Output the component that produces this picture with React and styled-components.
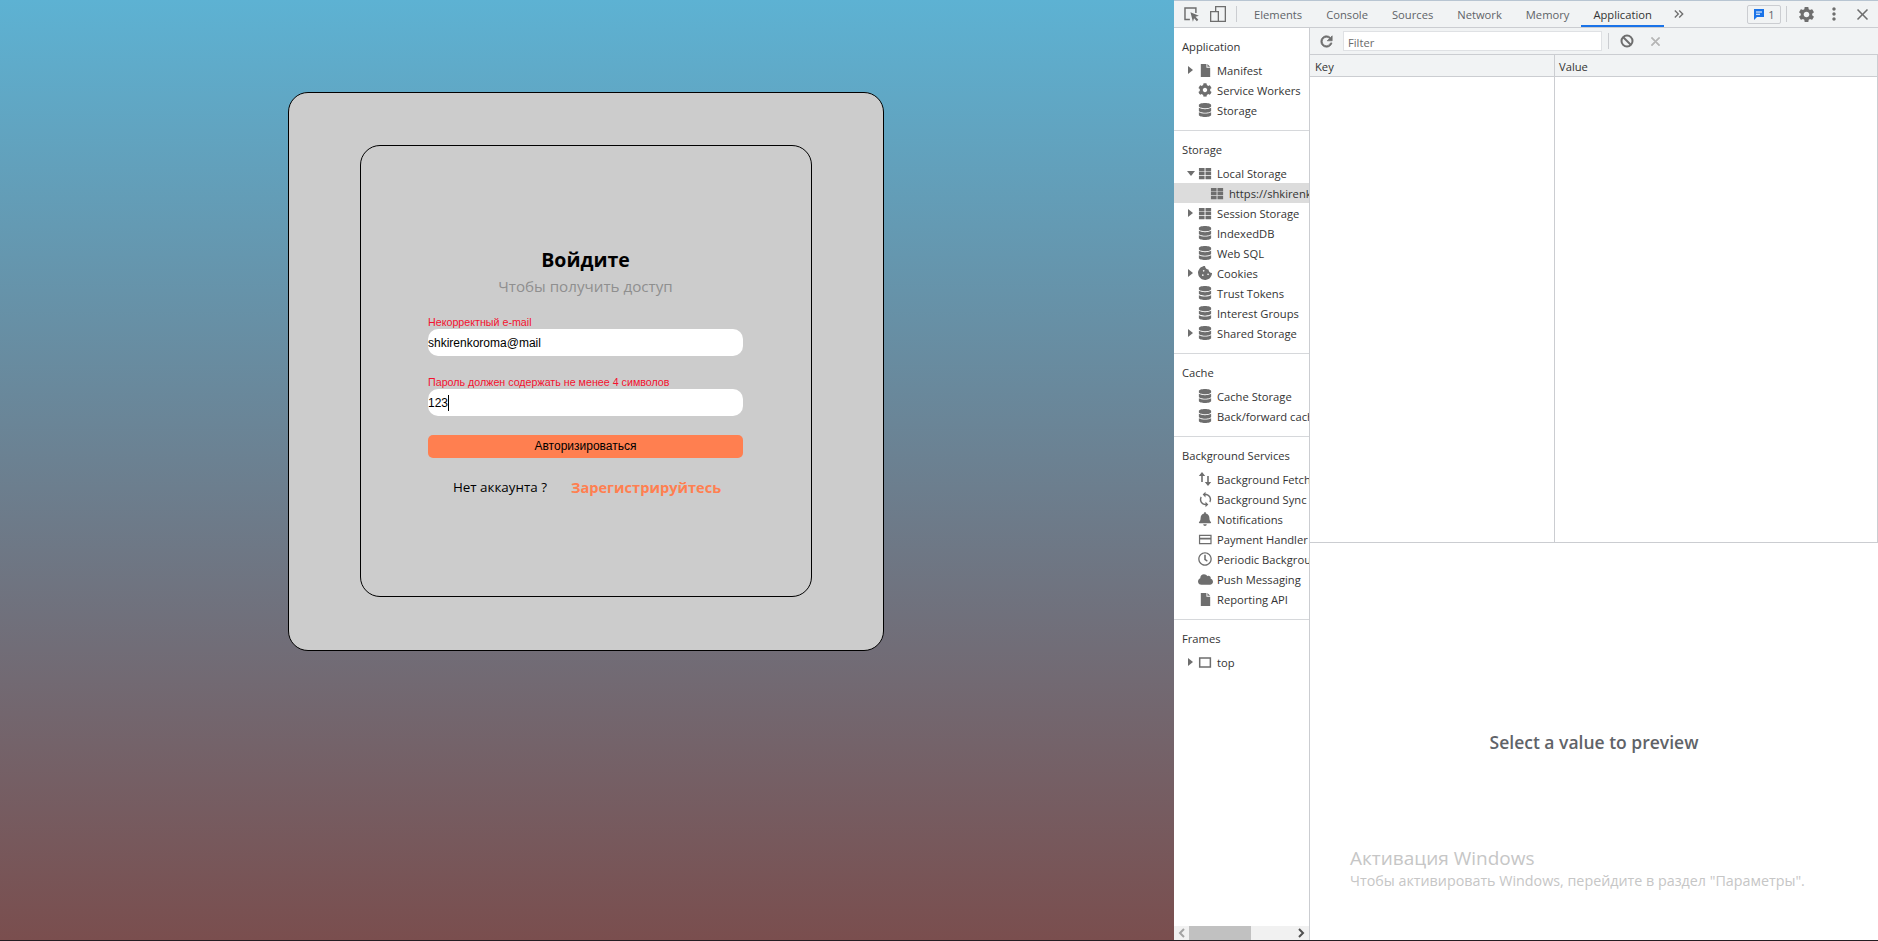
import React from "react";
import styled, { createGlobalStyle } from "styled-components";
import { FaDatabase, FaCog, FaCookieBite, FaBell, FaRegClock, FaCloud } from "react-icons/fa";
import { MdRefresh, MdClose, MdMoreVert, MdSettings, MdSync, MdKeyboardDoubleArrowRight } from "react-icons/md";

const UI = `"Open Sans", "Noto Sans", sans-serif`;
const ARIAL = `"Liberation Sans", Arial, sans-serif`;

const Global = createGlobalStyle`
  html, body { margin: 0; padding: 0; height: 941px; overflow: hidden; background: #fff; }
  * { box-sizing: border-box; }
`;

const Screen = styled.div`
  width: 1878px; height: 941px; display: flex; flex-direction: column; overflow: hidden;
`;
const Desk = styled.div`flex: 1; min-height: 0; display: flex;`;
const Taskbar = styled.div`height: 1px; flex: none; background: #241d22;`;

const Page = styled.main`
  flex: 0 0 1174px;
  background: linear-gradient(180deg, #5db2d3 0%, #7a4e4e 100%);
  padding: 92px 0 0 288px;
`;
const OuterCard = styled.section`
  width: 596px; height: 559px; background: #ccc; border: 1px solid #000; border-radius: 20px;
  display: flex; align-items: flex-start; justify-content: center; padding-top: 52px;
`;
const InnerCard = styled.div`
  width: 452px; height: 452px; border: 1px solid #000; border-radius: 20px;
  padding: 100px 0 0; display: flex; flex-direction: column; align-items: center;
`;
const Title = styled.h1`
  margin: 0 0 0 -1px; font: 700 19.5px/28px ${UI}; color: #000;
`;
const Subtitle = styled.p`
  margin: 2px 0 0 -1px; font: 400 15.2px/20px ${UI}; color: #8f8f8f;
`;
const Form = styled.form`
  width: 315px; margin: 19px 0 0 -1px; display: flex; flex-direction: column;
`;
const Field = styled.label`
  position: relative; display: block; margin-bottom: 19px;
`;
const ErrorText = styled.span`
  display: block; font: 400 10.7px/14px ${ARIAL}; color: #f5112f; white-space: nowrap;
`;
const Input = styled.input`
  display: block; width: 100%; height: 27px; border: 0; outline: 0; padding: 1px 0 0; border-radius: 10px;
  background: #fff; color: #000; font: 400 12px/26px ${ARIAL};
`;
const Caret = styled.i`
  position: absolute; left: 20px; bottom: 5px; width: 1px; height: 16px; background: #000;
`;
const Submit = styled.button`
  width: 100%; height: 23px; border: 0; border-radius: 5px; padding: 0; background: #ff7f50; color: #000;
  font: 400 12px/23px ${ARIAL};
`;
const AuthRow = styled.div`
  margin-top: 18px; margin-left: 2px; height: 22px; display: flex; justify-content: center; align-items: center; gap: 24px;
`;
const AuthText = styled.span`font: 400 13.4px/22px ${UI}; color: #000;`;
const AuthLink = styled.a`font: 700 14.6px/22px ${UI}; color: #ff7f50;`;

const Devtools = styled.aside`
  flex: 1; min-width: 0; display: flex; flex-direction: column; position: relative;
  background: #fff; border-top: 1px solid #b8c5d2; font-family: ${UI};
`;
const TopBar = styled.header`
  height: 27px; flex: none; background: #f1f3f4; border-bottom: 1px solid #cbcdd1;
  display: flex; align-items: center; padding-left: 8px; color: #5f6368;
`;
const ToolIcon = styled.span`
  display: flex; align-items: center; justify-content: center; width: ${p => p.$w || 20}px; height: 20px; flex: none;
  color: ${p => p.$color || "#6e6e6e"}; font-size: ${p => p.$size || 18}px;
  margin-left: ${p => p.$ml || 0}px;
  ${p => (p.$bold ? `svg path:not([fill="none"]) { stroke: currentColor; stroke-width: 1; }` : "")}
`;
const Sep = styled.span`
  width: 1px; height: 16px; background: #cbcdd1; flex: none; margin: 0 ${p => p.$mr || 0}px 0 ${p => p.$ml || 0}px;
`;
const Tabs = styled.nav`display: flex; height: 100%;`;
const Tab = styled.span`
  height: 26px; padding: 2px 12px 0; margin-bottom: -1px; display: flex; align-items: center; font-size: 11.2px; white-space: nowrap;
  color: ${p => (p.$active ? "#333" : "#5f6368")};
  border-bottom: 2px solid ${p => (p.$active ? "#1a73e8" : "transparent")};
`;
const Spacer = styled.span`flex: 1;`;
const Badge = styled.span`
  width: 34px; height: 19px; border: 1px solid #cbcdd1; border-radius: 2px; display: flex; align-items: center; justify-content: center; gap: 3px;
  font-size: 11px; color: #5f6368; flex: none; margin-right: 5px;
`;
const Work = styled.div`flex: 1; min-height: 0; display: flex;`;
const Sidebar = styled.div`
  width: 136px; flex: none; border-right: 1px solid #cbcdd1; display: flex; flex-direction: column; position: relative;
`;
const Section = styled.section`
  padding: 9px 0 10px; border-bottom: ${p => (p.$last ? "0" : "1px solid #d6d8db")};
`;
const SectionTitle = styled.h2`
  margin: 0 0 3px; padding-left: 8px; font: 400 11.2px/20px ${UI}; color: #333; white-space: nowrap;
`;
const Row = styled.div`
  height: 20px; display: flex; align-items: center; overflow: hidden; white-space: nowrap;
  padding-left: ${p => (p.$nested ? 24 : 12)}px;
  background: ${p => (p.$selected ? "#dcdcdc" : "transparent")};
  font-size: 11.2px; color: #333;
`;
const Arrow = styled.span`
  width: 10px; flex: none; display: flex; padding-left: 2px;
  &::before {
    content: ""; display: ${p => (p.$dir ? "block" : "none")};
    ${p => p.$dir === "right"
      ? "border-left: 5px solid #6e6e6e; border-top: 4px solid transparent; border-bottom: 4px solid transparent;"
      : "border-top: 5px solid #6e6e6e; border-left: 4px solid transparent; border-right: 4px solid transparent; margin-left: -1px;"}
  }
`;
const RowIcon = styled.span`
  width: 18px; height: 16px; flex: none; margin-right: 3px; color: #6e6e6e; font-size: ${p => p.$size || 14}px;
  display: flex; align-items: center; justify-content: center;
`;
const HScroll = styled.div`
  position: absolute; left: 0; right: 0; bottom: 0; height: 14px; background: #f1f1f1;
  display: flex; align-items: center; justify-content: space-between; padding: 0 3px;
`;
const Thumb = styled.span`
  position: absolute; left: 15px; width: 62px; top: 0; bottom: 0; background: #c1c1c1;
`;
const ScrollArrow = styled.svg`width: 10px; height: 10px; fill: none; stroke: ${p => p.$on ? "#505050" : "#a3a3a3"}; stroke-width: 2;`;
const Content = styled.div`flex: 1; min-width: 0; display: flex; flex-direction: column;`;
const FilterBar = styled.div`
  height: 27px; flex: none; background: #f1f3f4; border-bottom: 1px solid #cbcdd1; display: flex; align-items: center; padding-left: 6px;
`;
const FilterInput = styled.div`
  width: 259px; height: 20px; margin-left: 7px; background: #fff; border: 1px solid #dfe1e4;
  padding-left: 4px; font: 400 11.2px/21px ${UI}; color: #6a6a6a;
`;
const Table = styled.div`
  height: 488px; flex: none; display: grid; grid-template-columns: 245px 1fr; grid-template-rows: 22px 1fr;
  border-bottom: 1px solid #cbcdd1; border-right: 1px solid #cbcdd1;
`;
const HeadCell = styled.div`
  background: #f1f3f4; border-bottom: 1px solid #cbcdd1; padding-left: ${p => (p.$first ? 5 : 4)}px;
  border-right: ${p => (p.$first ? "1px solid #cbcdd1" : "0")};
  font: 400 11.2px/23px ${UI}; color: #333;
`;
const BodyCell = styled.div`border-right: ${p => (p.$first ? "1px solid #cbcdd1" : "0")};`;
const Preview = styled.div`
  flex: 1; display: flex; align-items: center; justify-content: center;
  font: 600 17.500px/20px ${UI}; color: #5f6368;
`;
const Watermark = styled.div`
  position: absolute; left: 176px; top: 844px; color: #c6c6c6; white-space: nowrap; pointer-events: none;
`;
const WatermarkTitle = styled.div`font: 400 19px/26px ${UI};`;
const WatermarkText = styled.div`font: 400 14.300px/20px ${UI};`;

const Svg = ({ children, s = 16, view = "0 0 16 16" }) => (
  <svg width={s} height={s} viewBox={view} fill="currentColor">{children}</svg>
);
const FileIcon = () => <Svg s={15}><path d="M3 1h6v4h4v10H3zM10 1l3 3h-3z" /></Svg>;
const GridIcon = () => (
  <Svg s={15}><path d="M1 2h6v3.500H1zM8 2h6v3.500H8zM1 6.200h6v3.500H1zM8 6.200h6v3.500H8zM1 10.500h6V14H1zM8 10.500h6V14H8z" /></Svg>
);
const FetchIcon = () => (
  <Svg s={16}><path d="M5 1 8.200 5H5.800v6H4.200V5H1.800zM11 15 7.800 11h2.400V5h1.600v6h2.400z" /></Svg>
);
const CardIcon = () => (
  <Svg s={15}><path fillRule="evenodd" d="M1 3h13.500v10H1zM2.300 4.300v1.800h10.900V4.300zM2.300 8v3.700h10.900V8z" /></Svg>
);
const FrameIcon = () => (
  <Svg s={15}><path fillRule="evenodd" d="M1 2.500h13v11H1zM2.600 4.100v7.800h9.800V4.100z" /></Svg>
);
const InspectIcon = () => (
  <Svg s={18}>
    <path d="M2 2h11v5h-1.300V3.300H3.300v9H7v1.300H2z" />
    <path d="M7.500 6.500 15 9.500l-3 1 2.500 2.700-1.300 1.300-2.500-2.700-1 3z" />
  </Svg>
);
const DeviceIcon = () => (
  <Svg s={20} view="0 0 20 20">
    <path fillRule="evenodd" d="M7 2h11v16H2V7h5zM8.300 3.300V7H11v9.700h5.700V3.300zM3.300 8.300v8.400h6.400V8.300z" />
  </Svg>
);
const BlockIcon = () => (
  <svg width="14" height="14" viewBox="0 0 14 14" fill="none" stroke="currentColor" strokeWidth="2">
    <circle cx="7" cy="7" r="5.500" /><path d="M3 3l8 8" />
  </svg>
);
const MessageIcon = () => (
  <svg width="12" height="13" viewBox="0 0 12 13"><path fill="#1a73e8" d="M1 1h10v8H4l-3 3z" /><path fill="#fff" d="M3 3.500h6v1H3zM3 5.800h4v1H3z" /></svg>
);

const icons = {
  file: <FileIcon />, gear: <FaCog />, db: <FaDatabase />, grid: <GridIcon />, cookie: <FaCookieBite />,
  fetch: <FetchIcon />, sync: <MdSync />, bell: <FaBell />, card: <CardIcon />, clock: <FaRegClock />,
  cloud: <FaCloud />, frame: <FrameIcon />,
};
const iconSizes = { sync: 17, cloud: 15 };

const sections = [
  { title: "Application", rows: [
    { label: "Manifest", icon: "file", arrow: "right" },
    { label: "Service Workers", icon: "gear" },
    { label: "Storage", icon: "db" },
  ] },
  { title: "Storage", rows: [
    { label: "Local Storage", icon: "grid", arrow: "down" },
    { label: "https://shkirenkoroma.github.io", icon: "grid", nested: true, selected: true },
    { label: "Session Storage", icon: "grid", arrow: "right" },
    { label: "IndexedDB", icon: "db" },
    { label: "Web SQL", icon: "db" },
    { label: "Cookies", icon: "cookie", arrow: "right" },
    { label: "Trust Tokens", icon: "db" },
    { label: "Interest Groups", icon: "db" },
    { label: "Shared Storage", icon: "db", arrow: "right" },
  ] },
  { title: "Cache", rows: [
    { label: "Cache Storage", icon: "db" },
    { label: "Back/forward cache", icon: "db" },
  ] },
  { title: "Background Services", rows: [
    { label: "Background Fetch", icon: "fetch" },
    { label: "Background Sync", icon: "sync" },
    { label: "Notifications", icon: "bell" },
    { label: "Payment Handler", icon: "card" },
    { label: "Periodic Background Sync", icon: "clock" },
    { label: "Push Messaging", icon: "cloud" },
    { label: "Reporting API", icon: "file" },
  ] },
  { title: "Frames", last: true, rows: [{ label: "top", icon: "frame", arrow: "right" }] },
];

const tabs = ["Elements", "Console", "Sources", "Network", "Memory", "Application"];

export default function App() {
  return (
    <Screen>
      <Global />
      <Desk>
        <Page>
          <OuterCard>
            <InnerCard>
              <Title>Войдите</Title>
              <Subtitle>Чтобы получить доступ</Subtitle>
              <Form onSubmit={e => e.preventDefault()}>
                <Field>
                  <ErrorText>Некорректный e-mail</ErrorText>
                  <Input readOnly value="shkirenkoroma@mail" />
                </Field>
                <Field>
                  <ErrorText>Пароль должен содержать не менее 4 символов</ErrorText>
                  <Input readOnly value="123" />
                  <Caret />
                </Field>
                <Submit type="submit">Авторизироваться</Submit>
              </Form>
              <AuthRow>
                <AuthText>Нет аккаунта ?</AuthText>
                <AuthLink>Зарегистрируйтесь</AuthLink>
              </AuthRow>
            </InnerCard>
          </OuterCard>
        </Page>
        <Devtools>
          <TopBar>
            <ToolIcon $w={18}><InspectIcon /></ToolIcon>
            <ToolIcon $w={20} $ml={8}><DeviceIcon /></ToolIcon>
            <Sep $ml={8} $mr={5} />
            <Tabs>
              {tabs.map(t => <Tab key={t} $active={t === "Application"}>{t}</Tab>)}
            </Tabs>
            <ToolIcon $w={18} $size={16} $ml={6}><MdKeyboardDoubleArrowRight /></ToolIcon>
            <Spacer />
            <Badge><MessageIcon />1</Badge>
            <Sep $mr={9} />
            <ToolIcon $size={19}><MdSettings /></ToolIcon>
            <ToolIcon $ml={8} $size={20}><MdMoreVert /></ToolIcon>
            <ToolIcon $ml={8} $size={19}><MdClose /></ToolIcon>
            <ToolIcon $w={6} />
          </TopBar>
          <Work>
            <Sidebar>
              {sections.map(s => (
                <Section key={s.title} $last={s.last}>
                  <SectionTitle>{s.title}</SectionTitle>
                  {s.rows.map(r => (
                    <Row key={r.label} $nested={r.nested} $selected={r.selected}>
                      <Arrow $dir={r.arrow} />
                      <RowIcon $size={iconSizes[r.icon]}>{icons[r.icon]}</RowIcon>
                      {r.label}
                    </Row>
                  ))}
                </Section>
              ))}
              <HScroll>
                <ScrollArrow viewBox="0 0 10 10"><path d="M7 1 3 5l4 4" /></ScrollArrow>
                <Thumb />
                <ScrollArrow $on viewBox="0 0 10 10"><path d="M3 1l4 4-4 4" /></ScrollArrow>
              </HScroll>
            </Sidebar>
            <Content>
              <FilterBar>
                <ToolIcon $size={17} $w={20} $bold><MdRefresh /></ToolIcon>
                <FilterInput>Filter</FilterInput>
                <Sep $ml={6} $mr={9} />
                <ToolIcon $w={18}><BlockIcon /></ToolIcon>
                <ToolIcon $size={15} $w={18} $ml={10} $color="#b5b5b5" $bold><MdClose /></ToolIcon>
              </FilterBar>
              <Table>
                <HeadCell $first>Key</HeadCell>
                <HeadCell>Value</HeadCell>
                <BodyCell $first />
                <BodyCell />
              </Table>
              <Preview>Select a value to preview</Preview>
            </Content>
          </Work>
          <Watermark>
            <WatermarkTitle>Активация Windows</WatermarkTitle>
            <WatermarkText>Чтобы активировать Windows, перейдите в раздел "Параметры".</WatermarkText>
          </Watermark>
        </Devtools>
      </Desk>
      <Taskbar />
    </Screen>
  );
}
